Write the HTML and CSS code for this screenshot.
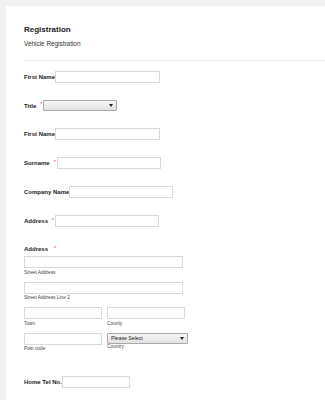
FILE: index.html
```html
<!DOCTYPE html>
<html>
<head>
<meta charset="utf-8">
<link rel="stylesheet" href="styles.css">
</head>
<body>
<div class="card">
  <div class="header">
    <div class="title">Registration</div>
    <div class="subtitle">Vehicle Registration</div>
  </div>
  <div class="sep"></div>

  <div class="row">
    <span class="label">First Name</span>
    <span class="input w105"></span>
  </div>
  <div class="row">
    <span class="label">Title</span><span class="req">*</span>
    <span class="select w74"><span class="arrow"></span></span>
  </div>
  <div class="row">
    <span class="label">First Name</span>
    <span class="input w105"></span>
  </div>
  <div class="row">
    <span class="label">Surname</span><span class="req">*</span>
    <span class="input w104"></span>
  </div>
  <div class="row">
    <span class="label">Company Name</span>
    <span class="input w104"></span>
  </div>
  <div class="row">
    <span class="label">Address</span><span class="req">*</span>
    <span class="input w104"></span>
  </div>

  <div class="group">
    <div class="glabel"><span class="label">Address</span><span class="req wide">*</span></div>
    <div class="field">
      <span class="input w159"></span>
      <span class="sub">Street Address</span>
    </div>
    <div class="field">
      <span class="input w159"></span>
      <span class="sub">Street Address Line 2</span>
    </div>
    <div class="pair">
      <div class="field">
        <span class="input w78"></span>
        <span class="sub">Town</span>
      </div>
      <div class="field">
        <span class="input w78"></span>
        <span class="sub">County</span>
      </div>
    </div>
    <div class="pair">
      <div class="field">
        <span class="input w78"></span>
        <span class="sub">Post code</span>
      </div>
      <div class="field">
        <span class="select w81 small">Please Select<span class="arrow"></span></span>
        <span class="sub csub">Country</span>
      </div>
    </div>
  </div>

  <div class="row tel">
    <span class="label">Home Tel No.</span>
    <span class="input w68"></span>
  </div>
</div>
</body>
</html>
```

FILE: styles.css
```css
html, body {
  margin: 0;
  padding: 0;
}
body {
  background: #f1f1f1;
  font-family: "Liberation Sans", Arial, sans-serif;
  color: #222;
  width: 325px;
  height: 400px;
  overflow: hidden;
}
.card {
  box-sizing: border-box;
  margin: 6px 0 0 6px;
  background: #fff;
  padding: 18px 0 0 18px;
  height: 394px;
  overflow: hidden;
}
.header {
  height: 36px;
}
.title {
  font-size: 8px;
  font-weight: bold;
  line-height: 10px;
  padding-top: 1px;
}
.subtitle {
  font-size: 6.4px;
  line-height: 8px;
  margin-top: 5px;
  color: #333;
}
.sep {
  border-top: 1px solid #ececec;
}
.row {
  display: flex;
  align-items: center;
  padding: 10px 0 7px;
}
.label {
  font-size: 6px;
  font-weight: bold;
  line-height: 8px;
  color: #222;
  white-space: nowrap;
}
.req {
  color: #e53030;
  font-size: 5px;
  line-height: 5px;
  position: relative;
  top: -1px;
  margin-left: 4px;
  margin-right: 1px;
}
.req.wide {
  margin-left: 6px;
}
.input {
  display: block;
  box-sizing: border-box;
  height: 12px;
  border: 1px solid #dadada;
  background: #fff;
}
.select {
  display: flex;
  align-items: center;
  position: relative;
  box-sizing: border-box;
  height: 11px;
  border: 1px solid #a8a8a8;
  border-radius: 1px;
  background: linear-gradient(#f6f6f6, #e2e2e2);
}
.select.small {
  font-size: 5.2px;
  color: #222;
  padding-left: 3px;
  white-space: nowrap;
}
.arrow {
  position: absolute;
  right: 3px;
  top: 3px;
  width: 0;
  height: 0;
  border-left: 2px solid transparent;
  border-right: 2px solid transparent;
  border-top: 3px solid #222;
}
.w105 { width: 105px; }
.w104 { width: 104px; }
.w74 { width: 74px; }
.w159 { width: 159px; }
.w78 { width: 78px; }
.w81 { width: 81px; }
.w68 { width: 68px; }

.group {
  padding-top: 10px;
}
.glabel {
  display: flex;
  align-items: center;
  height: 10px;
  margin-bottom: 2px;
}
.field {
  display: flex;
  flex-direction: column;
  align-items: flex-start;
}
.sub {
  font-size: 4.8px;
  line-height: 6px;
  color: #444;
  margin-top: 1.5px;
  margin-bottom: 6px;
}
.csub {
  margin-top: 0.5px;
}
.pair {
  display: flex;
  gap: 5px;
}
.row.tel {
  padding-top: 18px;
}
```
